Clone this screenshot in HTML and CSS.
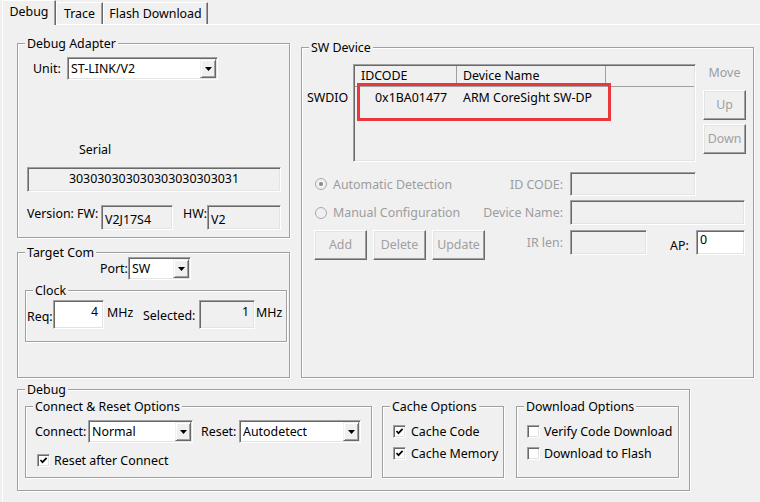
FILE: index.html
```html
<!DOCTYPE html>
<html>
<head>
<meta charset="utf-8">
<title>Options for Target - Debug</title>
<link rel="stylesheet" href="styles.css">
</head>
<body>
<div class="tabs">
  <div class="tab active t-debug">Debug</div>
  <div class="tab t-trace">Trace</div>
  <div class="tab t-flash">Flash Download</div>
</div>
<div class="page">
  <div class="top">
    <div class="leftcol">
      <div class="grp g-adapter">
        <div class="ttl">Debug Adapter</div>
        <div class="unit-row">
          <span class="w-unit">Unit:</span>
          <div class="combo w-unit-combo"><span class="ctext">ST-LINK/V2</span><span class="drop"><svg width="7" height="4" viewBox="0 0 7 4"><polygon points="0,0 7,0 3.5,4" fill="#000"/></svg></span></div>
        </div>
        <div class="serial-lbl">Serial</div>
        <div class="sbox serial">303030303030303030303031</div>
        <div class="ver-row">
          <span class="lbl-ver">Version: FW:</span>
          <div class="sbox fw">V2J17S4</div>
          <span class="lbl-hw">HW:</span>
          <div class="sbox hw">V2</div>
        </div>
      </div>
      <div class="grp g-target">
        <div class="ttl">Target Com</div>
        <div class="port-row">
          <span class="w-port">Port:</span>
          <div class="combo w-port-combo"><span class="ctext">SW</span><span class="drop"><svg width="7" height="4" viewBox="0 0 7 4"><polygon points="0,0 7,0 3.5,4" fill="#000"/></svg></span></div>
        </div>
        <div class="grp g-clock">
          <div class="ttl">Clock</div>
          <div class="clk-row">
            <span class="lbl-req">Req:</span>
            <div class="ebox req">4</div>
            <span class="mhz">MHz</span>
            <span class="lbl-sel">Selected:</span>
            <div class="sbox selbox">1</div>
            <span class="mhz2">MHz</span>
          </div>
        </div>
      </div>
    </div>
    <div class="grp g-sw">
      <div class="ttl">SW Device</div>
      <div class="sw-top">
        <span class="swdio">SWDIO</span>
        <div class="list">
          <div class="lhead"><span class="c1">IDCODE</span><span class="c2">Device Name</span><span class="c3"></span></div>
          <div class="lrow"><span class="c1 v1">0x1BA01477</span><span class="c2 v2">ARM CoreSight SW-DP</span></div>
          <div class="mark"></div>
        </div>
        <div class="sw-side">
          <div class="move">Move</div>
          <div class="btn up">Up</div>
          <div class="btn down">Down</div>
        </div>
      </div>
      <div class="sw-r1">
        <div class="radio-cell"><svg class="radio" width="12" height="12" viewBox="0 0 12 12"><circle cx="6" cy="6" r="5.5" fill="#f0f0f0" stroke="#a8a8a8"/><circle cx="6" cy="6" r="2" fill="#8a8a8a"/></svg><span class="dis">Automatic Detection</span></div>
        <span class="flab dis">ID CODE:</span>
        <div class="sbox idc"></div>
      </div>
      <div class="sw-r2">
        <div class="radio-cell"><svg class="radio" width="12" height="12" viewBox="0 0 12 12"><circle cx="6" cy="6" r="5.5" fill="#f0f0f0" stroke="#a8a8a8"/></svg><span class="dis">Manual Configuration</span></div>
        <span class="flab dis">Device Name:</span>
        <div class="sbox dn"></div>
      </div>
      <div class="sw-r3">
        <div class="btn-cell">
          <div class="btn b57">Add</div>
          <div class="btn b57">Delete</div>
          <div class="btn b57">Update</div>
        </div>
        <span class="flab3 dis">IR len:</span>
        <div class="sbox irl"></div>
        <span class="lbl-ap">AP:</span>
        <div class="ebox ap">0</div>
      </div>
    </div>
  </div>
  <div class="grp g-debug">
    <div class="ttl">Debug</div>
    <div class="dbg-row">
      <div class="grp g-conn">
        <div class="ttl">Connect &amp; Reset Options</div>
        <div class="conn-row">
          <span class="lbl-conn">Connect:</span>
          <div class="combo w-normal"><span class="ctext">Normal</span><span class="drop"><svg width="7" height="4" viewBox="0 0 7 4"><polygon points="0,0 7,0 3.5,4" fill="#000"/></svg></span></div>
          <span class="lbl-reset">Reset:</span>
          <div class="combo w-auto"><span class="ctext">Autodetect</span><span class="drop"><svg width="7" height="4" viewBox="0 0 7 4"><polygon points="0,0 7,0 3.5,4" fill="#000"/></svg></span></div>
        </div>
        <div class="chk-row rac"><span class="chk"><svg width="9" height="9" viewBox="0 0 9 9"><path d="M1.5 4 L3.5 6.2 L7.6 1.8" fill="none" stroke="#000" stroke-width="1.7"/></svg></span><span>Reset after Connect</span></div>
      </div>
      <div class="grp g-cache">
        <div class="ttl">Cache Options</div>
        <div class="chk-row c1r"><span class="chk"><svg width="9" height="9" viewBox="0 0 9 9"><path d="M1.5 4 L3.5 6.2 L7.6 1.8" fill="none" stroke="#000" stroke-width="1.7"/></svg></span><span>Cache Code</span></div>
        <div class="chk-row c2r"><span class="chk"><svg width="9" height="9" viewBox="0 0 9 9"><path d="M1.5 4 L3.5 6.2 L7.6 1.8" fill="none" stroke="#000" stroke-width="1.7"/></svg></span><span>Cache Memory</span></div>
      </div>
      <div class="grp g-dl">
        <div class="ttl">Download Options</div>
        <div class="chk-row d1r"><span class="chk"></span><span>Verify Code Download</span></div>
        <div class="chk-row d2r"><span class="chk"></span><span>Download to Flash</span></div>
      </div>
    </div>
  </div>
</div>
</body>
</html>
```
FILE: styles.css
```css
* { box-sizing: border-box; }
html, body { margin: 0; padding: 0; }
body {
  width: 760px;
  height: 502px;
  overflow: hidden;
  background: #f0f0f0;
  font-family: "Noto Sans", "Open Sans", "Liberation Sans", sans-serif;
  font-size: 12.4px;
  line-height: 15px;
  color: #000;
}

/* tabs */
.tabs { display: flex; align-items: flex-end; height: 24px; padding-left: 2px; }
.tab {
  height: 22px;
  padding-top: 3px;
  text-align: center;
  border-top: 1px solid #fff;
  border-left: 1px solid #fff;
  border-right: 1px solid #696969;
  box-shadow: inset -1px 0 0 #a0a0a0;
  white-space: nowrap;
}
.tab.active {
  height: 25px;
  margin-bottom: -1px;
  position: relative;
  z-index: 1;
  background: #f0f0f0;
  padding-top: 3px;
}
.t-debug { width: 54px; }
.t-trace { width: 47px; }
.t-flash { width: 105px; }

.page {
  margin-left: 2px;
  border-top: 1px solid #fff;
  border-left: 1px solid #fff;
  padding-left: 14px;
  height: 478px;
}

/* group boxes */
.grp {
  border: 1px solid #a0a0a0;
  box-shadow: inset 1px 1px 0 #fff, 1px 1px 0 #fff;
}
.ttl {
  margin: -8px 0 0 7px;
  padding: 0 2px;
  background: #f0f0f0;
  width: max-content;
  line-height: 15px;
  white-space: nowrap;
}

/* controls */
.combo {
  display: flex;
  height: 23px;
  background: #fff;
  border: 1px solid;
  border-color: #a0a0a0 #fff #fff #a0a0a0;
  box-shadow: inset 1px 1px 0 #696969, inset -1px -1px 0 #e3e3e3;
  padding: 1px;
}
.ctext { flex: 1; padding-left: 2px; line-height: 19px; white-space: nowrap; overflow: hidden; }
.drop {
  width: 16px;
  height: 19px;
  display: flex;
  align-items: center;
  justify-content: center;
  background: #f0f0f0;
  border: 1px solid;
  border-color: #f0f0f0 #696969 #696969 #f0f0f0;
  box-shadow: inset 1px 1px 0 #fff, inset -1px -1px 0 #a0a0a0;
}
.drop svg { display: block; margin-top: 1px; }
.sbox, .ebox {
  border: 1px solid;
  border-color: #a0a0a0 #fff #fff #a0a0a0;
  box-shadow: inset 1px 1px 0 #696969, inset -1px -1px 0 #e3e3e3;
  background: #f0f0f0;
  white-space: nowrap;
}
.ebox { background: #fff; }
.btn {
  height: 30px;
  border: 1px solid;
  border-color: #fff #696969 #696969 #fff;
  box-shadow: inset -1px -1px 0 #a0a0a0, inset 1px 1px 0 #e3e3e3;
  color: #a0a0a0;
  text-align: center;
  line-height: 27px;
}
.dis { color: #9d9d9d; }

/* layout: top */
.top { display: flex; align-items: flex-start; }
.leftcol { width: 273px; margin-top: 18px; }
.g-adapter { height: 195px; }
.g-target { height: 126px; margin-top: 14px; }

.unit-row { display: flex; align-items: center; height: 23px; margin-top: 6px; padding-left: 15px; }
.w-unit { width: 34px; }
.w-unit-combo { width: 151px; }
.serial-lbl { margin-top: 62px; padding-left: 61px; }
.serial { margin: 10px 0 0 9px; width: 254px; height: 25px; text-align: center; line-height: 21px; }
.ver-row { display: flex; align-items: flex-start; margin: 13px 0 0 9px; }
.lbl-ver { width: 74px; margin-top: 1px; white-space: nowrap; }
.fw { width: 72px; height: 25px; line-height: 23px; padding: 2px 0 0 3px; }
.lbl-hw { width: 24px; margin: 1px 0 0 10px; }
.hw { width: 74px; height: 25px; line-height: 23px; padding: 2px 0 0 3px; }

.port-row { display: flex; align-items: center; height: 23px; margin-top: -3px; padding-left: 82px; }
.w-port { width: 28px; }
.w-port-combo { width: 63px; }
.g-clock { margin: 10px 0 0 7px; width: 262px; height: 52px; }
.clk-row { display: flex; align-items: flex-start; margin-top: 2px; padding-left: 1px; }
.lbl-req { width: 26px; margin-top: 9px; }
.req { width: 51px; height: 29px; text-align: right; padding: 3px 5px 0 0; }
.mhz { width: 26px; margin: 5px 0 0 3px; }
.lbl-sel { width: 56px; margin: 8px 0 0 10px; white-space: nowrap; }
.selbox { width: 56px; height: 29px; text-align: right; padding: 3px 5px 0 0; }
.mhz2 { margin: 5px 0 0 1px; }

/* SW device */
.g-sw { width: 453px; height: 331px; margin: 22px 0 0 11px; }
.sw-top { display: flex; align-items: flex-start; margin-top: 9px; }
.swdio { width: 51px; padding-left: 5px; margin-top: 26px; }
.list {
  position: relative;
  width: 343px;
  height: 98px;
  border: 1px solid;
  border-color: #a0a0a0 #fff #fff #a0a0a0;
  box-shadow: inset 1px 1px 0 #696969, inset -1px -1px 0 #e3e3e3;
  padding: 1px;
}
.lhead { display: flex; height: 21px; border-bottom: 1px solid #a0a0a0; line-height: 20px; }
.lhead .c1 { width: 102px; border-right: 1px solid #a0a0a0; padding-left: 6px; }
.lhead .c2 { width: 149px; border-right: 1px solid #a0a0a0; padding-left: 6px; }
.lrow { display: flex; height: 22px; line-height: 22px; }
.lrow .c1 { width: 102px; padding-left: 20px; }
.lrow .c2 { padding-left: 6px; white-space: nowrap; }
.mark {
  position: absolute;
  left: 3px;
  top: 18px;
  width: 254px;
  height: 38px;
  border: 3px solid #e8383d;
}
.sw-side { margin: 1px 0 0 7px; width: 43px; }
.move { text-align: center; color: #9d9d9d; }
.up { margin-top: 10px; }
.down { margin-top: 4px; }

.sw-r1, .sw-r2 { display: flex; align-items: center; }
.sw-r1 { margin-top: 10px; height: 24px; }
.sw-r2 { margin-top: 4px; height: 25px; }
.radio-cell { width: 181px; padding-left: 13px; display: flex; align-items: center; gap: 6px; white-space: nowrap; }
.radio { display: block; flex: none; }
.flab { width: 80px; text-align: right; white-space: nowrap; }
.idc { margin-left: 7px; width: 126px; height: 24px; }
.dn { margin-left: 7px; width: 175px; height: 25px; }
.sw-r3 { display: flex; align-items: flex-start; margin-top: 5px; }
.btn-cell { width: 183px; padding-left: 12px; display: flex; gap: 6px; }
.b57 { width: 57px; }
.flab3 { width: 78px; text-align: right; margin-top: 5px; }
.irl { margin-left: 7px; width: 77px; height: 25px; }
.lbl-ap { width: 26px; margin: 8px 0 0 23px; }
.ap { width: 49px; height: 25px; padding: 1px 0 0 3px; line-height: 15px; }

/* bottom debug */
.g-debug { width: 673px; height: 102px; margin-top: 11px; }
.dbg-row { display: flex; align-items: flex-start; margin-top: 9px; padding-left: 7px; }
.g-conn { width: 347px; height: 72px; }
.g-cache { width: 122px; height: 72px; margin-left: 10px; }
.g-dl { width: 163px; height: 72px; margin-left: 12px; }
.conn-row { display: flex; align-items: center; height: 23px; margin-top: 6px; padding-left: 9px; }
.lbl-conn { width: 53px; }
.w-normal { width: 105px; }
.lbl-reset { width: 38px; margin-left: 8px; }
.w-auto { width: 122px; }
.chk-row { display: flex; align-items: center; height: 13px; line-height: 13px; white-space: nowrap; }
.chk {
  width: 13px;
  height: 13px;
  flex: none;
  background: #fff;
  border: 1px solid;
  border-color: #a0a0a0 #fff #fff #a0a0a0;
  box-shadow: inset 1px 1px 0 #696969, inset -1px -1px 0 #e3e3e3;
  padding: 1px;
}
.chk svg { display: block; }
.rac { margin-top: 11px; padding-left: 11px; gap: 4px; }
.c1r { margin-top: 11px; padding-left: 10px; gap: 5px; }
.c2r { margin-top: 9px; padding-left: 10px; gap: 5px; }
.d1r { margin-top: 11px; padding-left: 10px; gap: 4px; }
.d2r { margin-top: 9px; padding-left: 10px; gap: 4px; }
```
